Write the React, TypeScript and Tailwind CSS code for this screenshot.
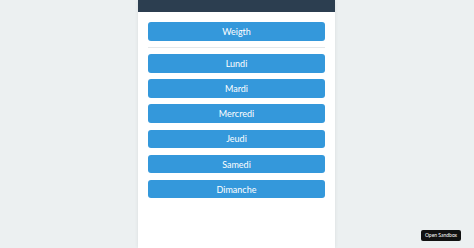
import React from 'react';

const days = ['Lundi', 'Mardi', 'Mercredi', 'Jeudi', 'Samedi', 'Dimanche'];

const DayButton: React.FC<{ label: string }> = ({ label }) => (
  <button className="w-full h-[18.5px] rounded-[3px] bg-[#3498db] text-white text-[9px] leading-none flex items-center justify-center">
    {label}
  </button>
);

export default function App() {
  return (
    <div className="relative w-[474px] h-[248px] bg-[#ecf0f1] overflow-hidden" style={{ fontFamily: 'Lato, "Open Sans", sans-serif' }}>
      <div className="ml-[138px] w-[197px] h-full bg-white shadow-[0_0_4px_rgba(0,0,0,0.08)] flex flex-col">
        <div className="h-[12px] bg-[#2c3e50]" />
        <div className="px-[10px] pt-[10px]">
          <DayButton label="Weigth" />
          <div className="mt-[6px] mb-[6.5px] border-t border-[#e5e8ea]" />
          <div className="flex flex-col gap-[6.7px]">
            {days.map(d => (
              <DayButton key={d} label={d} />
            ))}
          </div>
        </div>
      </div>
      {/* sandbox badge */}
      <button className="absolute left-[421px] top-[229.5px] w-[40px] h-[11.5px] rounded-[2px] bg-[#111] text-white text-[5px] leading-none flex items-center justify-center">
        Open Sandbox
      </button>
    </div>
  );
}
